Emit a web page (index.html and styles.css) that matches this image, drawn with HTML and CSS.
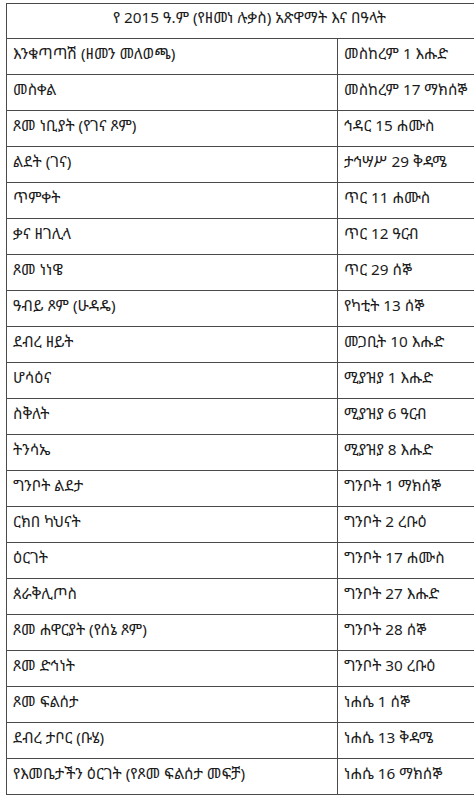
FILE: index.html
```html
<!DOCTYPE html>
<html lang="am">
<head>
<meta charset="utf-8">
<title>የ 2015 ዓ.ም አጽዋማት እና በዓላት</title>
<link rel="stylesheet" href="styles.css">
</head>
<body>
<div class="frame">
<table class="cal">
  <colgroup><col class="c-name"><col class="c-date"></colgroup>
  <tr class="head"><td colspan="2">የ 2015 ዓ.ም (የዘመነ ሉቃስ) አጽዋማት እና በዓላት</td></tr>
  <tr><td>እንቁጣጣሽ (ዘመን መለወጫ)</td><td>መስከረም 1 እሑድ</td></tr>
  <tr><td>መስቀል</td><td>መስከረም 17 ማክሰኞ</td></tr>
  <tr><td>ጾመ ነቢያት (የገና ጾም)</td><td>ኅዳር 15 ሐሙስ</td></tr>
  <tr><td>ልደት (ገና)</td><td>ታኅሣሥ 29 ቅዳሜ</td></tr>
  <tr><td>ጥምቀት</td><td>ጥር 11 ሐሙስ</td></tr>
  <tr><td>ቃና ዘገሊላ</td><td>ጥር 12 ዓርብ</td></tr>
  <tr><td>ጾመ ነነዌ</td><td>ጥር 29 ሰኞ</td></tr>
  <tr><td>ዓብይ ጾም (ሁዳዴ)</td><td>የካቲት 13 ሰኞ</td></tr>
  <tr><td>ደብረ ዘይት</td><td>መጋቢት 10 እሑድ</td></tr>
  <tr><td>ሆሳዕና</td><td>ሚያዝያ 1 እሑድ</td></tr>
  <tr><td>ስቅለት</td><td>ሚያዝያ 6 ዓርብ</td></tr>
  <tr><td>ትንሳኤ</td><td>ሚያዝያ 8 እሑድ</td></tr>
  <tr><td>ግንቦት ልደታ</td><td>ግንቦት 1 ማክሰኞ</td></tr>
  <tr><td>ርክበ ካህናት</td><td>ግንቦት 2 ረቡዕ</td></tr>
  <tr><td>ዕርገት</td><td>ግንቦት 17 ሐሙስ</td></tr>
  <tr><td>ጰራቅሊጦስ</td><td>ግንቦት 27 እሑድ</td></tr>
  <tr><td>ጾመ ሐዋርያት (የሰኔ ጾም)</td><td>ግንቦት 28 ሰኞ</td></tr>
  <tr><td>ጾመ ድኅነት</td><td>ግንቦት 30 ረቡዕ</td></tr>
  <tr><td>ጾመ ፍልሰታ</td><td>ነሐሴ 1 ሰኞ</td></tr>
  <tr><td>ደብረ ታቦር (ቡሄ)</td><td>ነሐሴ 13 ቅዳሜ</td></tr>
  <tr><td>የእመቤታችን ዕርገት (የጾመ ፍልሰታ መፍቻ)</td><td>ነሐሴ 16 ማክሰኞ</td></tr>
</table>
</div>
</body>
</html>
```

FILE: styles.css
```css
html, body {
  background: #ffffff;
  overflow: hidden;
}
body {
  margin: 3px 0 0 6px;
  font-family: "Noto Sans Ethiopic", Roboto, "Noto Sans", sans-serif;
  font-size: 15.3px;
  color: #1c1c1c;
}
.frame {
  width: 468px;
  overflow: hidden;
}
.cal {
  border-collapse: collapse;
  width: 486px;
  table-layout: fixed;
}
.c-name {
  width: 331px;
}
.c-date {
  width: 155px;
}
.cal td {
  border: 1px solid #4a4a4a;
  vertical-align: top;
  padding: 5px 6px 0 6px;
  height: 36px;
  box-sizing: border-box;
  line-height: 19px;
  white-space: nowrap;
}
.cal .head td {
  text-align: center;
  height: 35px;
  padding-top: 4px;
}
```
